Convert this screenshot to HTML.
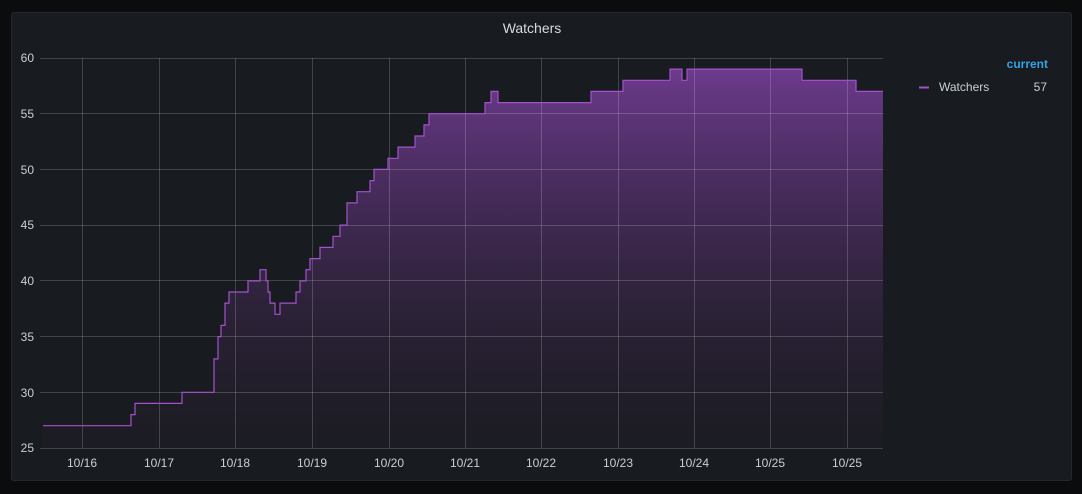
<!DOCTYPE html>
<html><head><style>
html,body{margin:0;padding:0;background:#0b0c0e;width:1082px;height:494px;overflow:hidden;font-family:"Liberation Sans",sans-serif;}
.panel{position:absolute;left:11px;top:12px;width:1059px;height:467px;background:#181b1f;border:1px solid #25272c;border-radius:3px;}
svg{position:absolute;left:0;top:0;}
</style></head><body>
<div class="panel"></div>
<svg width="1082" height="494">
<defs><linearGradient id="g" x1="0" y1="58" x2="0" y2="448" gradientUnits="userSpaceOnUse">
<stop offset="0" stop-color="#7a3f9e" stop-opacity="0.9"/>
<stop offset="1" stop-color="#2a1f33" stop-opacity="0.2"/></linearGradient></defs>
<text x="532" y="33" fill="#d8d9e3" font-size="14" text-anchor="middle">Watchers</text>
<path fill="url(#g)" d="M43 425.7 H131 V414.6 H135 V403.4 H182 V392.3 H214 V358.9 H218 V336.6 H221 V325.4 H225 V303.1 H229 V292 H248 V280.9 H260 V269.7 H266 V280.9 H268 V292 H270 V303.1 H275 V314.3 H280 V303.1 H296 V292 H300 V280.9 H306 V269.7 H310 V258.6 H320 V247.4 H333 V236.3 H340 V225.1 H347 V202.9 H357 V191.7 H370 V180.6 H374 V169.4 H388 V158.3 H398 V147.1 H415 V136 H424 V124.9 H429 V113.7 H485 V102.6 H491 V91.4 H498 V102.6 H591 V91.4 H623 V80.3 H670 V69.1 H682 V80.3 H687 V69.1 H802 V80.3 H856 V91.4 H883 V448 H43 Z"/>
<g stroke="#ffffff" stroke-opacity="0.18" stroke-width="1">
<line x1="40" y1="58.5" x2="883" y2="58.5"/><line x1="40" y1="113.5" x2="883" y2="113.5"/><line x1="40" y1="169.5" x2="883" y2="169.5"/><line x1="40" y1="225.5" x2="883" y2="225.5"/><line x1="40" y1="280.5" x2="883" y2="280.5"/><line x1="40" y1="336.5" x2="883" y2="336.5"/><line x1="40" y1="392.5" x2="883" y2="392.5"/><line x1="40" y1="448.5" x2="883" y2="448.5"/>
<line x1="82.5" y1="58" x2="82.5" y2="448"/><line x1="159.5" y1="58" x2="159.5" y2="448"/><line x1="235.5" y1="58" x2="235.5" y2="448"/><line x1="312.5" y1="58" x2="312.5" y2="448"/><line x1="389.5" y1="58" x2="389.5" y2="448"/><line x1="465.5" y1="58" x2="465.5" y2="448"/><line x1="541.5" y1="58" x2="541.5" y2="448"/><line x1="618.5" y1="58" x2="618.5" y2="448"/><line x1="694.5" y1="58" x2="694.5" y2="448"/><line x1="770.5" y1="58" x2="770.5" y2="448"/><line x1="847.5" y1="58" x2="847.5" y2="448"/>
</g>
<path fill="none" stroke="#a352cc" stroke-width="1.2" d="M43 425.7 H131 V414.6 H135 V403.4 H182 V392.3 H214 V358.9 H218 V336.6 H221 V325.4 H225 V303.1 H229 V292 H248 V280.9 H260 V269.7 H266 V280.9 H268 V292 H270 V303.1 H275 V314.3 H280 V303.1 H296 V292 H300 V280.9 H306 V269.7 H310 V258.6 H320 V247.4 H333 V236.3 H340 V225.1 H347 V202.9 H357 V191.7 H370 V180.6 H374 V169.4 H388 V158.3 H398 V147.1 H415 V136 H424 V124.9 H429 V113.7 H485 V102.6 H491 V91.4 H498 V102.6 H591 V91.4 H623 V80.3 H670 V69.1 H682 V80.3 H687 V69.1 H802 V80.3 H856 V91.4 H883"/>
<g fill="#c7d0d9" font-size="12" text-anchor="end">
<text x="34" y="62">60</text><text x="34" y="118">55</text><text x="34" y="174">50</text><text x="34" y="229">45</text><text x="34" y="285">40</text><text x="34" y="341">35</text><text x="34" y="397">30</text><text x="34" y="452">25</text>
</g>
<g fill="#c7d0d9" font-size="12" text-anchor="middle">
<text x="82" y="467">10/16</text><text x="159" y="467">10/17</text><text x="235" y="467">10/18</text><text x="312" y="467">10/19</text><text x="389" y="467">10/20</text><text x="465" y="467">10/21</text><text x="541" y="467">10/22</text><text x="618" y="467">10/23</text><text x="694" y="467">10/24</text><text x="770" y="467">10/25</text><text x="847" y="467">10/25</text>
</g>
<text x="1048" y="68" fill="#33a2e5" font-size="12" font-weight="bold" text-anchor="end">current</text>
<line x1="919" y1="87.5" x2="929" y2="87.5" stroke="#a352cc" stroke-width="2"/>
<text x="939" y="91" fill="#c7d0d9" font-size="12">Watchers</text>
<text x="1047" y="91" fill="#c7d0d9" font-size="12" text-anchor="end">57</text>
</svg>
</body></html>
